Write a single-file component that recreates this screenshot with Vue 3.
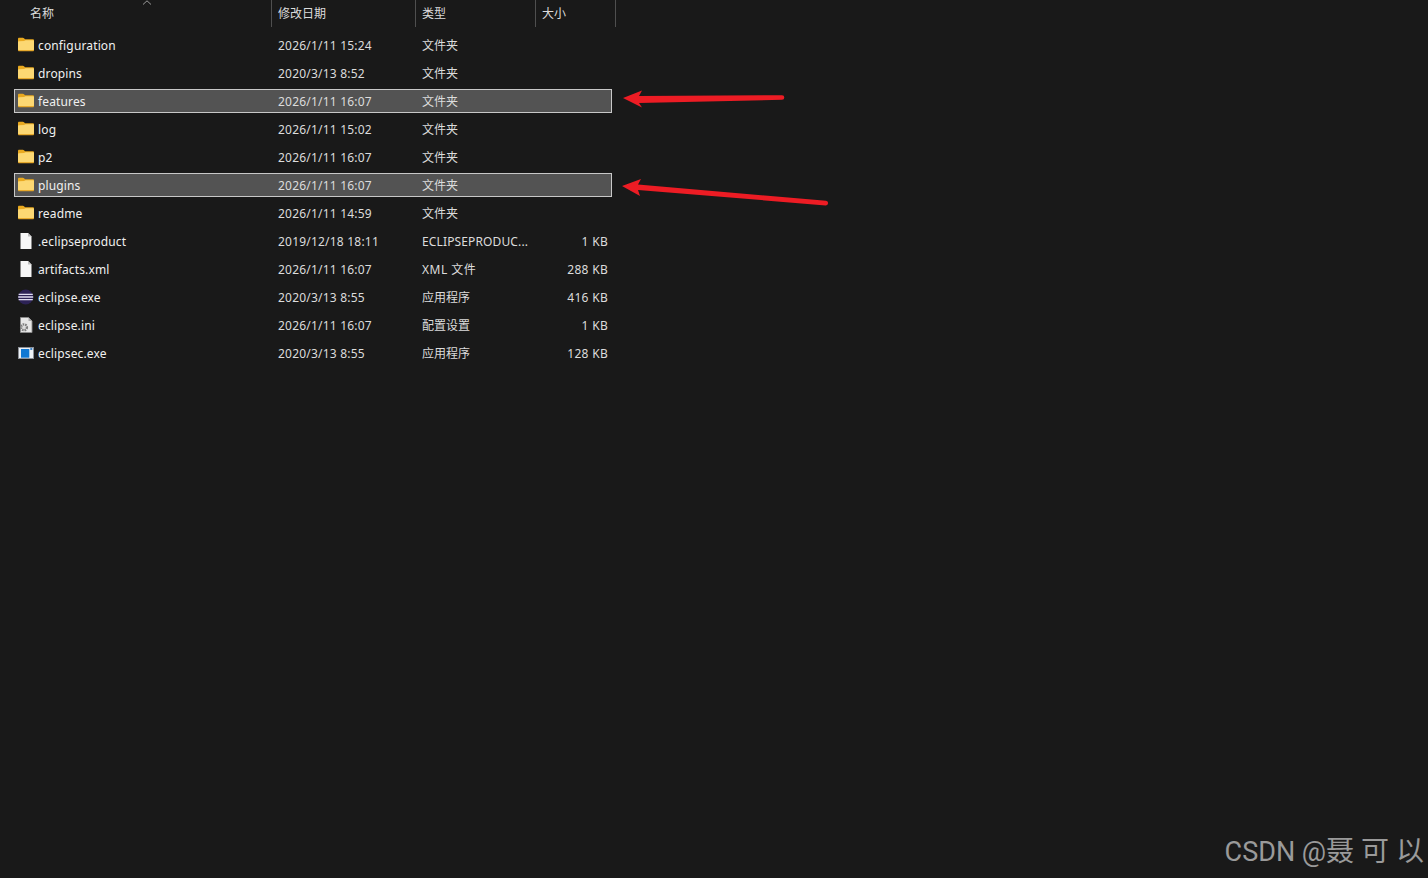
<script setup>
const rows = [
  { name: 'configuration', date: '2026/1/11 15:24', type: '文件夹', size: '', icon: 'folder' },
  { name: 'dropins', date: '2020/3/13 8:52', type: '文件夹', size: '', icon: 'folder' },
  { name: 'features', date: '2026/1/11 16:07', type: '文件夹', size: '', icon: 'folder', sel: true },
  { name: 'log', date: '2026/1/11 15:02', type: '文件夹', size: '', icon: 'folder' },
  { name: 'p2', date: '2026/1/11 16:07', type: '文件夹', size: '', icon: 'folder' },
  { name: 'plugins', date: '2026/1/11 16:07', type: '文件夹', size: '', icon: 'folder', sel: true },
  { name: 'readme', date: '2026/1/11 14:59', type: '文件夹', size: '', icon: 'folder' },
  { name: '.eclipseproduct', date: '2019/12/18 18:11', type: 'ECLIPSEPRODUC...', size: '1 KB', icon: 'file', kind: 'latin' },
  { name: 'artifacts.xml', date: '2026/1/11 16:07', type: 'XML 文件', size: '288 KB', icon: 'file', kind: 'xml' },
  { name: 'eclipse.exe', date: '2020/3/13 8:55', type: '应用程序', size: '416 KB', icon: 'eclipse' },
  { name: 'eclipse.ini', date: '2026/1/11 16:07', type: '配置设置', size: '1 KB', icon: 'ini' },
  { name: 'eclipsec.exe', date: '2020/3/13 8:55', type: '应用程序', size: '128 KB', icon: 'console' }
]
</script>

<template>
  <div class="page">
    <div class="header">
      <div class="hcol hname">名称<svg class="caret" width="10" height="5" viewBox="0 0 10 5"><path d="M1 4.500 5 .8 9 4.500" fill="none" stroke="#9a9a9a" stroke-width="1"/></svg></div>
      <div class="hcol hdate">修改日期</div>
      <div class="hcol htype">类型</div>
      <div class="hcol hsize">大小</div>
    </div>
    <div class="list">
      <div v-for="r in rows" :key="r.name" class="row" :class="{ sel: r.sel }">
        <div class="cname">
          <svg class="icon" width="16" height="16" viewBox="0 0 16 16">
            <template v-if="r.icon === 'folder'">
              <path d="M0 2C0 1.200.5.700 1.200.700h3.700c.5 0 .8.200 1.100.5L7 2.300h7.800c.7 0 1.200.5 1.200 1.200v9.300c0 .7-.5 1.200-1.200 1.200H1.200C.5 14 0 13.500 0 12.800Z" fill="#e9a91f"/>
              <path d="M0 5.200C0 4.600.4 4.200 1 4.200l5-.1L7.500 3.300H15c.6 0 1 .4 1 1v8c0 .6-.4 1-1 1H1c-.6 0-1-.4-1-1Z" fill="#fcd873"/>
              <path d="M0 12.400c0 .5.500.9 1 .9h14c.5 0 1-.4 1-.9v1c0 .4-.5.8-1 .8H1c-.5 0-1-.4-1-.8Z" fill="#e3a52a"/>
            </template>
            <template v-else-if="r.icon === 'file'">
              <path d="M2.500 0H10l3.500 3.500V16h-11Z" fill="#f6f6f6"/>
              <path d="M10 0v3.500h3.500Z" fill="#bdbdbd"/>
            </template>
            <template v-else-if="r.icon === 'eclipse'">
              <circle cx="7.700" cy="8" r="7.500" fill="#2c2255"/>
              <path d="M.6 5.300h14.200M.2 8h15M.6 10.700h14.200" stroke="#dedbf0" stroke-width="1.300"/>
            </template>
            <template v-else-if="r.icon === 'ini'">
              <path d="M2.500.5H10.500l3.500 3.500V15.500H2.500Z" fill="#e6e6e6" stroke="#8a8a8a" stroke-width=".9"/>
              <path d="M10.500.5v3.500h3.500Z" fill="#a8a8a8"/>
              <circle cx="6" cy="10.300" r="2.900" fill="none" stroke="#7d7d7d" stroke-width="2.400" stroke-dasharray="1.600 .8"/>
              <circle cx="6" cy="10.300" r="1" fill="#d8d8d8"/>
            </template>
            <template v-else>
              <rect x=".5" y="2.500" width="15" height="11" fill="#eef2f6" stroke="#8b8f96"/>
              <rect x="3" y="4" width="8.300" height="8.700" fill="#0f78d4"/>
              <rect x="12.300" y="3" width="2" height="2" fill="#3f85c8"/>
            </template>
          </svg>
          <span class="nm">{{ r.name }}</span>
        </div>
        <div class="cdate">{{ r.date }}</div>
        <div class="ctype" :class="r.kind">{{ r.type }}</div>
        <div class="csize">{{ r.size }}</div>
      </div>
    </div>
    <svg class="arrows" width="260" height="130" viewBox="0 0 260 130">
      <g fill="#ed1c24" transform="translate(-610 -80)">
        <path d="M623 98 642 90.500 639 96 782 95.200a2.200 2.200 0 0 1 0 4.600L639 103 642 107.500Z"/>
        <path d="M622 186 641 179 638 184.500 826 200.800a2.300 2.300 0 0 1-.4 4.600L638 190 640 196Z"/>
      </g>
    </svg>
    <div class="mark"><span class="mark-latin">CSDN @</span>聂 可 以</div>
  </div>
</template>

<style>
html, body { margin: 0; background: #191919; }
</style>

<style scoped>
.page {
  position: relative;
  width: 1428px;
  height: 878px;
  overflow: hidden;
  background: #191919;
  color: #dcdcdc;
  font: 12px/16px "Noto Sans", "Noto Sans CJK SC", sans-serif;
}
.header { display: flex; height: 27px; }
.hcol { box-sizing: border-box; height: 27px; padding-top: 6px; border-right: 1px solid #4f4f4f; }
.hname { position: relative; width: 272px; padding-left: 30px; }
.hdate { width: 144px; padding-left: 6px; }
.htype { width: 120px; padding-left: 6px; }
.hsize { width: 80px; padding-left: 6px; }
.caret { position: absolute; left: 142px; top: 0; }
.list { display: flex; flex-direction: column; gap: 4px; padding: 6px 0 0 14px; }
.row {
  box-sizing: border-box;
  display: grid;
  grid-template-columns: 263px 144px 120px 66px;
  align-items: center;
  width: 598px;
  height: 24px;
  border: 1px solid transparent;
}
.row.sel { background: #535353; border-color: #c8c8c8; }
.cname { display: flex; align-items: center; padding-left: 3px; }
.icon { flex: none; }
.nm { margin-left: 4px; color: #f0f0f0; letter-spacing: .14px; padding-top: 1px; }
.cdate { white-space: nowrap; letter-spacing: .21px; padding-top: 1px; }
.ctype { white-space: nowrap; padding-top: 1px; }
.ctype.latin { letter-spacing: .13px; }
.ctype.xml { letter-spacing: .5px; }
.csize { text-align: right; white-space: nowrap; letter-spacing: .3px; padding-top: 1px; }
.arrows { position: absolute; left: 610px; top: 80px; }
.mark {
  position: absolute;
  right: 4px;
  bottom: 8px;
  color: #9a9a9a;
  font: 28px/36px Roboto, "Noto Sans CJK SC", sans-serif;
  white-space: nowrap;
}
.mark-latin { font-size: 27px; }
</style>
